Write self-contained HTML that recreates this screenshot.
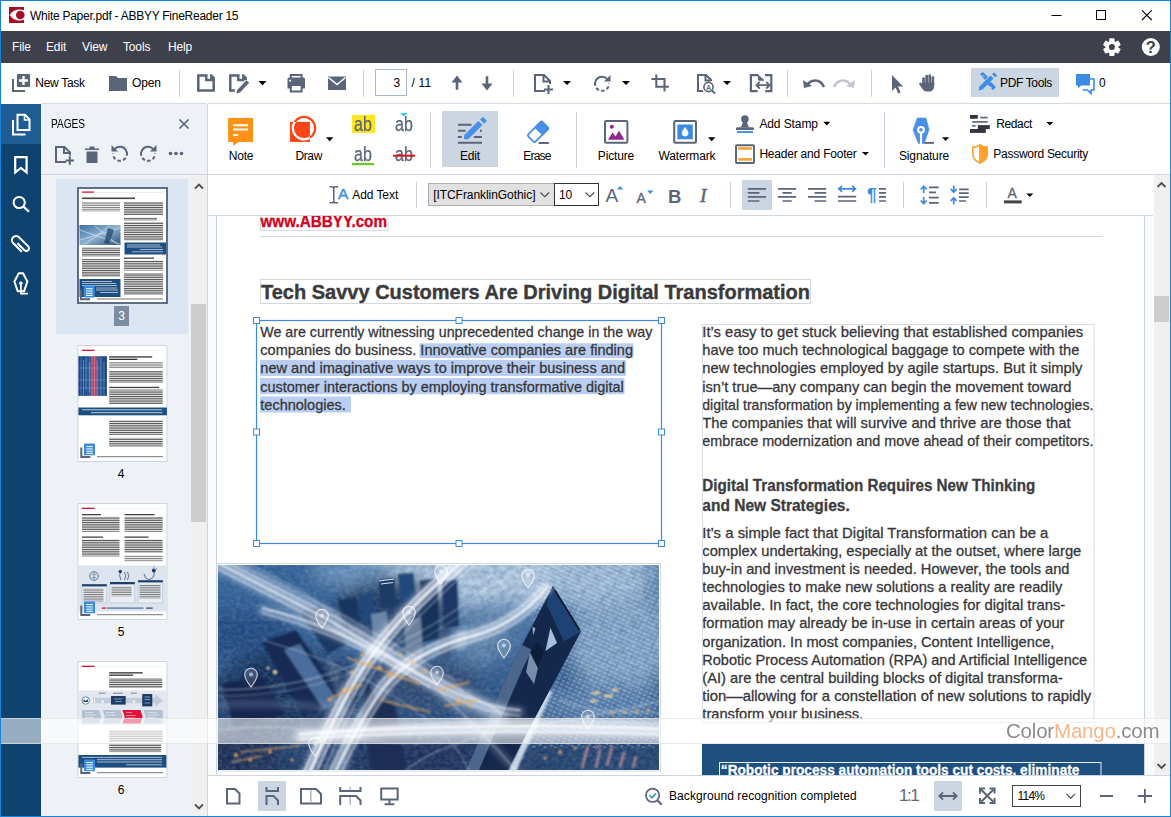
<!DOCTYPE html>
<html lang="en"><head><meta charset="utf-8"><title>White Paper.pdf - ABBYY FineReader 15</title>
<style>
*{box-sizing:border-box;margin:0;padding:0}
html,body{width:1171px;height:817px;overflow:hidden;background:#fff}
body{position:relative;font-family:"Liberation Sans",sans-serif;font-size:12px;color:#000}
.abs{position:absolute}
.t{position:absolute;white-space:nowrap;line-height:14px;height:14px}
.ui{letter-spacing:-0.15px}
.sep{position:absolute;width:1px;background:#c9d2de}
svg{position:absolute;overflow:visible}
.g{fill:#5b6579}
.gs{stroke:#5b6579;fill:none}
#win{position:absolute;left:0;top:0;width:1171px;height:817px;border:1px solid #1883d7;pointer-events:none;z-index:50}
#title{left:1px;top:1px;width:1169px;height:30px;background:#fff}
#menu{left:1px;top:31px;width:1169px;height:32px;background:#3e404c;color:#fff}
#tb{left:1px;top:63px;width:1169px;height:40px;background:#fff}
#side{left:1px;top:104px;width:40px;height:712px;background:#0e426f}
#side .act{position:absolute;left:0;top:0;width:40px;height:40px;background:#1f5c93}
#pages{left:41px;top:103px;width:166px;height:713px;background:#eef1f5;border-top:1px solid #d3dae4}
#ribbon{left:208px;top:103px;width:962px;height:71px;background:#fff;border-top:1px solid #d3dae4}
#edbar{left:208px;top:174px;width:962px;height:41px;background:#fff;border-top:1px solid #ccd5e1}
#doc{left:208px;top:215px;width:945px;height:560px;background:#fff;border-top:1px solid #ccd5e1;overflow:hidden}
#status{left:208px;top:775px;width:962px;height:41px;background:#fff;border-top:1px solid #ccd5e1}
#vsb{left:1154px;top:175px;width:16px;height:600px;background:#f0f0f0}
.btnbg{position:absolute;background:#ccd6e2}
</style></head><body>
<div id="title" class="abs"></div>
<div id="menu" class="abs"></div>
<div id="tb" class="abs"></div>
<div id="side" class="abs"><div class="act"></div></div>
<div id="pages" class="abs"></div>
<div class="abs" style="left:207px;top:104px;width:1px;height:712px;background:#ccd5e1"></div>
<div id="ribbon" class="abs"></div>
<div id="edbar" class="abs"></div>
<div id="doc" class="abs"></div>
<div id="vsb" class="abs"></div>
<div id="status" class="abs"></div>
<!-- TITLE BAR -->
<svg width="1171" height="64" style="left:0;top:0" viewBox="0 0 1171 64">
 <rect x="9" y="7" width="15" height="16" fill="#a50c23"/>
 <path d="M9.6 15 C13 9.6 19 8.4 24 10.2 V19.8 C19 21.6 13 20.4 9.6 15Z" fill="#fff"/>
 <circle cx="20.3" cy="15" r="4.3" fill="#a50c23"/>
 <!-- window controls -->
 <path d="M1051.5 15.5 H1061.5" stroke="#000" stroke-width="1"/>
 <rect x="1096.5" y="10.5" width="9" height="9" fill="none" stroke="#000" stroke-width="1"/>
 <path d="M1142 10.3 L1151.7 20 M1151.7 10.3 L1142 20" stroke="#000" stroke-width="1.1"/>
 <!-- gear -->
 <g transform="translate(1111.9 47.1)" fill="#fff">
  <circle r="6.4"/>
  <rect x="-2.7" y="-8.8" width="5.4" height="17.6" rx="0.8"/>
  <rect x="-2.7" y="-8.8" width="5.4" height="17.6" rx="0.8" transform="rotate(60)"/>
  <rect x="-2.7" y="-8.8" width="5.4" height="17.6" rx="0.8" transform="rotate(120)"/>
  <circle r="3" fill="#3e404c"/>
 </g>
 <circle cx="1150.8" cy="47" r="9" fill="#fff"/>

</svg>
<div class="t" style="left:30px;top:9px;letter-spacing:-0.260px" id="ttl">White Paper.pdf - ABBYY FineReader 15</div>
<div class="t ui" style="left:12px;top:40px;color:#fff">File</div>
<div class="t ui" style="left:46px;top:40px;color:#fff">Edit</div>
<div class="t ui" style="left:82px;top:40px;color:#fff">View</div>
<div class="t ui" style="left:123px;top:40px;color:#fff">Tools</div>
<div class="t ui" style="left:168px;top:40px;color:#fff">Help</div>
<div class="t" style="left:1145.800px;top:39px;width:10px;text-align:center;color:#3e404c;font-weight:bold;font-size:16.500px;line-height:16px;height:16px">?</div>

<!-- TOOLBAR -->
<div class="btnbg" style="left:971px;top:68px;width:88px;height:29px"></div>
<div class="sep" style="left:179px;top:70px;height:27px"></div>
<div class="sep" style="left:363px;top:70px;height:27px"></div>
<div class="sep" style="left:513px;top:70px;height:27px"></div>
<div class="sep" style="left:787px;top:70px;height:27px"></div>
<div class="sep" style="left:871px;top:70px;height:27px"></div>
<div class="abs" style="left:375px;top:69px;width:32px;height:27px;border:1px solid #a9b7cb;background:#fff"></div>
<div class="t" style="left:35.3px;top:76px;letter-spacing:-0.3px">New Task</div>
<div class="t ui" style="left:132px;top:76px">Open</div>
<div class="t ui" style="left:380px;top:76px;width:20px;text-align:right">3</div>
<div class="t" style="left:411.4px;top:76px;letter-spacing:0.2px">/ 11</div>
<div class="t" style="left:1000px;top:76px;letter-spacing:-0.350px">PDF Tools</div>
<div class="t ui" style="left:1099px;top:76px">0</div>
<svg width="1171" height="44" style="left:0;top:62px" viewBox="0 62 1171 44">
 <!-- new task -->
 <path d="M13 79 V91 H25" class="gs" stroke-width="2"/>
 <rect x="17" y="74" width="13" height="13" rx="1" class="g"/>
 <path d="M19 80.5 H28 M23.5 76 V85" stroke="#fff" stroke-width="2.4"/>
 <!-- open -->
 <path d="M109 76 h7 l2 2 h9 v13 h-18z" class="g"/>
 <!-- save -->
 <path d="M198.3 75.4 H211.2 L213.7 77.9 V90.4 H198.3Z M206.3 75 V80 H211.3 V75" class="gs" stroke-width="2.5"/>
 <rect x="207.6" y="73.5" width="2.5" height="4" fill="#fff"/>
 <!-- save as -->
 <path d="M235 90.4 H230.3 V75.4 H243.2 L245.7 77.9 V80 M238.3 75 V80 H243.3 V75" class="gs" stroke-width="2.5"/>
 <path d="M236.2 93.6 L237.2 89.9 L246.4 80.2 L249.2 82.8 L240 92.500Z" class="g"/>
 <rect x="239.6" y="73.5" width="2.5" height="4" fill="#fff"/>
 <path d="M258.5 81 h8 l-4 4.300z" fill="#000"/>
 <!-- print -->
 <path d="M290.8 78 V75 h10.8 V78" class="gs" stroke-width="2"/>
 <path d="M287.5 79 a1.5 1.5 0 0 1 1.5 -1.5 h14.5 a1.5 1.5 0 0 1 1.5 1.5 v9.5 h-4 v-3.5 h-9.5 v3.5 h-4z" class="g"/>
 <path d="M290.8 85 h10.8 v6.5 h-10.8z" class="gs" stroke-width="2"/>
 <rect x="289.3" y="79.8" width="1.8" height="1.8" fill="#fff"/>
 <!-- mail -->
 <path d="M328 76.5 h18 v13.5 h-18z" class="g"/>
 <path d="M328.5 77.5 l8.5 7 l8.5 -7" stroke="#fff" stroke-width="1.6" fill="none"/>
 <!-- up / down -->
 <path d="M457 75.6 L462.5 82.4 H458.3 V89.8 H455.7 V82.4 H451.500Z" class="g"/>
 <path d="M487 90.4 L492.500 83.600 H488.300 V76.200 H485.700 V83.600 H481.500Z" class="g"/>
 <!-- add page -->
 <path d="M545 91 H535 V75 H544 L550 81 V84 M543.5 75.5 V81.5 H549.5" class="gs" stroke-width="2"/>
 <path d="M544 89.5 H553 M548.5 85 V94" class="gs" stroke-width="2"/>
 <path d="M563 81 h8 l-4 4z" fill="#000"/>
 <!-- rotate -->
 <path d="M607.5 79.5 A7 7 0 1 0 609 83.5" class="gs" stroke-width="2" stroke-dasharray="19 2.4 3.4 2.4 3.4 2.4 3.4 2.4 10"/>
 <path d="M610.5 75 v6.5 h-6.5z" class="g"/>
 <path d="M622 81 h8 l-4 4z" fill="#000"/>
 <!-- crop -->
 <path d="M651.4 79 H664.5 V91.6 M656.3 74.4 V86.8 H668.8" class="gs" stroke-width="2.1"/>
 <!-- recognize -->
 <path d="M703 91 H698 V75 H706 L711 80 V81 M705.5 75.5 V80.5 H710.5" class="gs" stroke-width="2"/>
 <circle cx="708.5" cy="87" r="4.6" class="gs" stroke-width="1.6"/>
 <path d="M712 90.5 l3 3" class="gs" stroke-width="2"/>
 <path d="M723 81 h8 l-4 4z" fill="#000"/>
 <text x="706.3" y="89.6" font-family="Liberation Sans, sans-serif" font-size="6.5" font-weight="bold" fill="#5b6579">A</text>
 <!-- compare -->
 <path d="M758.4 75.2 H750.9 V91.2 H757.6 M765 75.2 H771.3 V91.2 H765.3" class="gs" stroke-width="2.2"/>
 <path d="M758.4 75.2 L763.8 80.2 H758.4Z" class="g" stroke="#5b6579" stroke-width="1"/>
 <path d="M756.5 85.2 H769.5 M759.8 81.9 l-3.3 3.3 l3.3 3.3 M766.2 81.9 l3.3 3.3 l-3.3 3.3" class="gs" stroke-width="1.8"/>
 <!-- undo redo -->
 <path d="M807 86 C810 79 820 78 824 87" class="gs" stroke-width="2.6"/>
 <path d="M803 80 l1 8 l8 -2z" class="g"/>
 <path d="M851 86 C848 79 838 78 834 87" fill="none" stroke="#c2c6cd" stroke-width="2.6"/>
 <path d="M855 80 l-1 8 l-8 -2z" fill="#c2c6cd"/>
 <!-- pointer -->
 <path d="M892 75 V91 l3.6 -3.6 l2.6 6 l2.4 -1 l-2.6 -6 h5z" class="g"/>
 <!-- hand -->
 <g class="g">
 <rect x="922.2" y="77.3" width="2.7" height="9" rx="1.3"/>
 <rect x="925.3" y="74.8" width="2.7" height="11" rx="1.3"/>
 <rect x="928.4" y="74.3" width="2.7" height="11" rx="1.3"/>
 <rect x="931.5" y="76.3" width="2.7" height="10" rx="1.3"/>
 <path d="M922.2 82.5 H934.2 V86 C934.2 89.5 932 91.6 929 91.6 H927 C924.5 91.6 923.3 90.3 922 88.3 L919.3 84.3 C918.6 83 920.3 82 921.3 83 L922.2 84Z"/>
 </g>
 <!-- pdf tools -->
 <g fill="#3b8be3">
  <path d="M978.5 90.5 l1 -4 l11 -11 l3 3 l-11 11z"/>
  <path d="M992 74 l2-1.5 l3 3 l-1.5 2z"/>
  <path d="M980 74 l3 -2 l5 5 l-3 3z M987.5 84.5 l3 -3 l5.5 5.5 l-3 3z"/>
 </g>
 <path d="M982.6 75.2 l1.6 1.6 M989.6 86.2 l1.6 1.6" stroke="#fff" stroke-width="0.9"/>
 <!-- comments -->
 <path d="M1080 79 h14 v11 h-3 v3.5 l-3.5 -3.5 h-5" fill="none" stroke="#3b8be3" stroke-width="1.6"/>
 <path d="M1076 74 h14 v11.5 h-9 l-3 3 v-3 h-2z" fill="#3b8be3"/>
</svg>
<!-- SIDEBAR ICONS -->
<svg width="42" height="300" style="left:0;top:104px" viewBox="0 104 42 300">
 <g fill="none" stroke="#fff" stroke-width="2">
  <path d="M17.5 114.8 H25 L29.5 119.3 V130 H17.500Z"/>
  <path d="M24.5 115 V120 H29.5" stroke-width="1.6"/>
  <path d="M13 120 V134.5 H25.5"/>
  <path d="M15.2 157.2 H26.6 V172.5 L20.9 168 L15.2 172.500Z" stroke-width="2.2"/>
  <circle cx="19.2" cy="202.5" r="5.6"/>
  <path d="M23.4 206.6 L29 211.6" stroke-width="2.2"/>
  <path d="M16.5 243.5 L22.5 249.5 a2.3 2.3 0 0 0 3.3 -3.3 L17.8 238.2 a3.6 3.6 0 0 0 -5.1 5.1 L20.2 250.8" transform="translate(21.2 245) scale(1.15) translate(-19.7 -245)" stroke-width="1.8"/>
  <path d="M18.8 273.2 H23 L27.4 281.5 L24 291.3 H17.8 L14.4 281.500Z" stroke-linejoin="round"/>
  <circle cx="20.9" cy="283.3" r="1.4" fill="#fff" stroke-width="1"/>
  <path d="M20.9 284 V293.6 H27.8" stroke-width="1.8"/>
 </g>
</svg>
<!-- PAGES PANEL -->
<div class="t" style="left:50.5px;top:117px;font-size:12px;transform:scaleX(0.84);transform-origin:0 0">PAGES</div>
<div class="abs" style="left:41px;top:174px;width:166px;height:1px;background:#ccd5e1"></div>
<svg width="166" height="70" style="left:41px;top:104px" viewBox="41 104 166 70">
 <path d="M179.5 119.5 L188.5 128.5 M188.5 119.5 L179.5 128.5" class="gs" stroke-width="1.7"/>
 <!-- add page -->
 <path d="M66 162 H56 V147 H64.5 L70 152.5 V155.5 M64 147.5 V153 H69.5" class="gs" stroke-width="2"/>
 <path d="M65.5 160.5 H74 M69.8 156.3 V164.8" class="gs" stroke-width="2"/>
 <!-- trash -->
 <path d="M86.5 151.5 H97.5 V163 H86.500Z M85 148.5 H99 V150 H85Z M89.5 146.5 H94.5 V148.5 H89.500Z" class="g"/>
 <!-- rotate left -->
 <path d="M114.5 149.5 A7 7 0 1 1 113 153.5" class="gs" stroke-width="2" stroke-dasharray="19 2.4 3.4 2.4 3.4 2.4 3.4 2.4 10"/>
 <path d="M111.5 145 v6.5 h6.500z" class="g"/>
 <!-- rotate right -->
 <path d="M153.5 149.5 A7 7 0 1 0 155 153.5" class="gs" stroke-width="2" stroke-dasharray="19 2.4 3.4 2.4 3.4 2.4 3.4 2.4 10"/>
 <path d="M156.5 145 v6.5 h-6.500z" class="g"/>
 <circle cx="170.5" cy="153.5" r="1.8" class="g"/><circle cx="176" cy="153.5" r="1.8" class="g"/><circle cx="181.5" cy="153.5" r="1.8" class="g"/>
</svg>
<!-- thumbnails -->
<div class="abs" style="left:56px;top:179px;width:132px;height:155px;background:#dce6f2"></div>
<div class="abs" style="left:191px;top:175px;width:16px;height:641px;background:#f0f0f0"></div>
<div class="abs" style="left:191px;top:304px;width:15px;height:218px;background:#cdcdcd"></div>
<svg width="166" height="642" style="left:41px;top:175px" viewBox="41 175 166 642">
 <defs>
  <pattern id="tl" width="4" height="1.8" patternUnits="userSpaceOnUse"><rect width="4" height="1" fill="#505050"/></pattern>
  <pattern id="tl2" width="4" height="1.8" patternUnits="userSpaceOnUse"><rect width="4" height="1" fill="#808080"/></pattern>
  <linearGradient id="ph3" x1="0" y1="0" x2="1" y2="1"><stop offset="0" stop-color="#3e6f9e"/><stop offset="0.5" stop-color="#8fb2d2"/><stop offset="1" stop-color="#2a5078"/></linearGradient>
  <linearGradient id="ph4" x1="0" y1="0" x2="1" y2="0"><stop offset="0" stop-color="#17407a"/><stop offset="0.35" stop-color="#2a5a98"/><stop offset="0.56" stop-color="#b0506e"/><stop offset="0.7" stop-color="#3a5a9a"/><stop offset="1" stop-color="#1a3f78"/></linearGradient>
  <g id="dico">
   <path d="M0 4 V13.5 H9" fill="none" stroke="#5b6579" stroke-width="2"/>
   <rect x="2.7" y="0" width="11" height="11.7" rx="0.8" fill="#3b8be3"/>
   <path d="M5 3 H11.5 M5 5.3 H11.5 M5 7.6 H11.5 M5 9.7 H11.5" stroke="#fff" stroke-width="1"/>
  </g>
 </defs>
 <path d="M195 188.5 L199 184.5 L203 188.5" fill="none" stroke="#505050" stroke-width="1.8"/>
 <path d="M195 804.5 L199 808.5 L203 804.5" fill="none" stroke="#505050" stroke-width="1.8"/>
 <!-- page 3 -->
 <rect x="78" y="188" width="89" height="115" fill="#fff" stroke="#5d6d85" stroke-width="2"/>
 <rect x="82" y="191.5" width="12" height="1.2" fill="#d0021b"/>
 <rect x="96" y="192.2" width="67" height="0.5" fill="#ddd"/>
 <rect x="82" y="197.5" width="53" height="1.6" fill="#444"/>
 <rect x="82" y="202" width="38" height="9.5" fill="url(#tl2)"/>
 <rect x="124" y="202" width="39" height="13" fill="url(#tl)"/>
 <rect x="124" y="217.5" width="33" height="3" fill="url(#tl)"/>
 <rect x="124" y="222" width="39" height="18.5" fill="url(#tl)"/>
 <rect x="79.5" y="225" width="41" height="20" fill="url(#ph3)"/>
 <path d="M80 230 L120 244 M84 245 L110 226 M80 240 L120 228 M95 226 L118 245" stroke="#dce9f5" stroke-width="0.8" opacity="0.8"/>
 <path d="M108 228 l6 2 l-5 14 l-5 -1z" fill="#274c72" opacity="0.8"/>
 <rect x="124.5" y="242.5" width="41.5" height="12" fill="#1c4e80"/>
 <path d="M127 245 H160 M127 247 H162 M140 249.5 H163 M132 251.8 H163" stroke="#dfe8f2" stroke-width="0.7"/>
 <rect x="82" y="247.5" width="38" height="9" fill="url(#tl)"/>
 <rect x="82" y="259" width="38" height="18" fill="url(#tl)"/>
 <rect x="124" y="257.5" width="30" height="1.4" fill="#555"/>
 <rect x="124" y="260.5" width="39" height="10" fill="url(#tl)"/>
 <rect x="124" y="273" width="39" height="22" fill="url(#tl)"/>
 <rect x="79.5" y="279" width="41" height="18" fill="#1c4e80"/>
 <path d="M82 281.5 H112 M82 283.5 H116 M82 285.5 H117 M96 288 H117 M96 290 H118 M100 292.5 H118" stroke="#dfe8f2" stroke-width="0.7"/>
 <rect x="97" y="298.5" width="66" height="1" fill="#777"/>
 <use href="#dico" x="81" y="285.7"/>
 <!-- page 4 -->
 <rect x="77.9" y="345.5" width="89" height="116" fill="#fff" stroke="#cfd6df" stroke-width="1"/>
 <rect x="82" y="349.7" width="12.5" height="1.2" fill="#d0021b"/>
 <rect x="96" y="350.4" width="67" height="0.5" fill="#e2e2e2"/>
 <rect x="78.4" y="356.2" width="28.5" height="39.7" fill="url(#ph4)"/>
 <path d="M92 356.2 V396 M94.5 356.2 V396 M97 360 V396 M89.5 362 V392" stroke="#f07a8a" stroke-width="0.8" opacity="0.8"/>
 <path d="M81 356.2 V396 M83.5 360 V396 M86 358 V390 M101 358 V396 M104 362 V396" stroke="#6fc0e8" stroke-width="0.7" opacity="0.7"/>
 <path d="M78.4 380 H106.9 M78.4 388 H106.9 M78.4 368 H100" stroke="#9fd0f0" stroke-width="0.5" opacity="0.6"/>
 <rect x="109.2" y="356.3" width="43" height="1.3" fill="#333"/><rect x="109.2" y="358.7" width="28" height="1.3" fill="#333"/>
 <rect x="109.2" y="362" width="53.5" height="6.5" fill="url(#tl2)"/>
 <rect x="109.2" y="370.8" width="53.5" height="12" fill="url(#tl)"/>
 <rect x="109.2" y="386.8" width="50" height="1.3" fill="#444"/>
 <rect x="109.2" y="389.5" width="53.5" height="14.5" fill="url(#tl)"/>
 <rect x="78.4" y="407.5" width="88.5" height="7.8" fill="#1c4e80"/>
 <path d="M82 409.8 H162 M91 412.7 H162.5" stroke="#e6eef6" stroke-width="0.8"/>
 <rect x="109.2" y="420.3" width="53.5" height="14.8" fill="url(#tl)"/>
 <rect x="109.2" y="437.8" width="53.5" height="8.8" fill="url(#tl)"/>
 <rect x="97" y="456.2" width="66" height="1" fill="#777"/>
 <use href="#dico" x="81.3" y="443.6"/>
 <!-- page 5 -->
 <rect x="77.9" y="503.5" width="89" height="116" fill="#fff" stroke="#cfd6df" stroke-width="1"/>
 <rect x="82" y="507.7" width="12.5" height="1.2" fill="#d0021b"/>
 <rect x="96" y="508.4" width="67" height="0.5" fill="#e2e2e2"/>
 <rect x="82" y="514" width="19" height="1.3" fill="#444"/>
 <rect x="82" y="516.9" width="37.5" height="14.8" fill="url(#tl)"/>
 <rect x="82" y="536.5" width="21" height="1.3" fill="#444"/>
 <rect x="82" y="539.2" width="37.5" height="17.2" fill="url(#tl)"/>
 <rect x="124.6" y="514" width="30" height="1.3" fill="#444"/>
 <rect x="124.6" y="516.9" width="38" height="14.8" fill="url(#tl)"/>
 <rect x="124.6" y="536.5" width="24" height="1.3" fill="#444"/>
 <rect x="124.6" y="539.2" width="38" height="13.5" fill="url(#tl)"/>
 <rect x="124.6" y="555.4" width="38" height="6" fill="url(#tl2)"/>
 <rect x="78.4" y="565.5" width="88" height="46" fill="#dde4ee"/>
 <circle cx="94" cy="576" r="4.3" fill="none" stroke="#3d5a80" stroke-width="0.8"/><path d="M91.5 575 q2.5 -2 5 0 M92 577.5 h4 M94 572 v8" fill="none" stroke="#3d5a80" stroke-width="0.5"/>
 <path d="M121 571 q-3 4 0 9 M124.5 572 q2.5 3.5 0 8 M127.5 572 q2.5 3.5 0 8" fill="none" stroke="#3d5a80" stroke-width="0.8"/><circle cx="120.3" cy="571.5" r="1.7" fill="#1c3e68"/>
 <path d="M144 574 q2 7 7 5 q4 -2 3 -8" fill="none" stroke="#3d5a80" stroke-width="0.9"/><circle cx="153.8" cy="570.5" r="1.9" fill="#1c3e68"/><path d="M153.8 566.5 v1.5 M157 568 l-1 1" stroke="#3d5a80" stroke-width="0.6"/>
 <rect x="82" y="584.2" width="24.8" height="2.5" fill="#1c3e68"/><rect x="82" y="586.7" width="24.8" height="16.3" fill="#e9eef5" stroke="#a9b6c8" stroke-width="0.5"/><rect x="83.5" y="588.5" width="20" height="13" fill="url(#tl2)"/>
 <rect x="110" y="582" width="24.8" height="2.5" fill="#1c3e68"/><rect x="110" y="584.5" width="24.8" height="18.5" fill="#e9eef5" stroke="#a9b6c8" stroke-width="0.5"/><rect x="111.5" y="586.3" width="20" height="10" fill="url(#tl2)"/>
 <rect x="138" y="580.2" width="24.8" height="2.5" fill="#1c3e68"/><rect x="138" y="582.7" width="24.8" height="20.3" fill="#e9eef5" stroke="#a9b6c8" stroke-width="0.5"/><rect x="139.5" y="584.5" width="21" height="14" fill="url(#tl2)"/>
 <rect x="101.8" y="607.5" width="4" height="1.2" fill="#d0021b"/><rect x="106.8" y="607.5" width="36.7" height="1.2" fill="#4a6a95"/><rect x="146.2" y="607.5" width="6.5" height="1.2" fill="#1c3e68"/>
 <rect x="97" y="614.2" width="66" height="1" fill="#777"/>
 <use href="#dico" x="81.3" y="601.6"/>
 <!-- page 6 -->
 <rect x="77.9" y="661.5" width="89" height="116" fill="#fff" stroke="#cfd6df" stroke-width="1"/>
 <rect x="82" y="665.7" width="12.5" height="1.2" fill="#d0021b"/>
 <rect x="96" y="666.4" width="67" height="0.5" fill="#e2e2e2"/>
 <rect x="109.2" y="672.2" width="33.5" height="1.3" fill="#333"/><rect x="109.2" y="674.5" width="24" height="1.3" fill="#333"/>
 <rect x="109.2" y="678.2" width="53" height="9.8" fill="url(#tl)"/>
 <rect x="78.4" y="690.4" width="88" height="34.5" fill="#e3e8f0"/>
 <path d="M92 697.8 H155 V694 L163 700.5 L155 707 V703.3 H92Z" fill="#c3ccd9"/>
 <circle cx="85.7" cy="700.5" r="3.7" fill="#fff" stroke="#1c3e68" stroke-width="0.6"/><path d="M83.5 699 l2.2 2 l2.2 -2 v3 h-4.400z" fill="#1c3e68"/>
 <path d="M92.5 698.5 v4.5 M94.5 698.5 v4.5" stroke="#fff" stroke-width="0.8"/>
 <path d="M101.3 702.5 l1.3 -3 l1.3 3z M132.7 702.5 l1.3 -3 l1.3 3z" fill="#fff"/>
 <rect x="111" y="696" width="14.7" height="8.6" fill="#1c3e68"/><path d="M114 699 h8.5 M115 701.5 h6.5" stroke="#c8d4e4" stroke-width="0.6"/>
 <rect x="142.2" y="694" width="10.1" height="12.4" fill="#1c3e68"/><path d="M144.5 697 h5.5 M144.5 699.5 h5.5 M144.5 703 h5.5" stroke="#c8d4e4" stroke-width="0.6"/>
 <path d="M99 693.2 h6.5 M113 693.2 h10 M131 693.2 h6" stroke="#555" stroke-width="0.7"/>
 <path d="M82 710 h17 l2.3 6.8 l-2.3 6.8 h-17z" fill="#b4bfd0"/>
 <path d="M102.6 710 h17.5 l2.3 6.8 l-2.3 6.8 h-17.5 l2.3 -6.800z" fill="#b4bfd0"/>
 <path d="M122.4 710 h18 l2.3 6.8 l-2.3 6.8 h-18 l2.3 -6.800z" fill="#e0123c"/>
 <path d="M143.5 710 h19.3 v13.6 h-19.3 l2.3 -6.800z" fill="#b4bfd0"/>
 <path d="M85 712.5 h8 M85 715 h10 M85 717.5 h9 M106 712.5 h9 M106 715 h10 M126 712.5 h6 M126 715.5 h10 M126 718 h9 M147.5 712.5 h9 M147.5 715 h11 M147.5 717.5 h8" stroke="#fff" stroke-width="0.6" opacity="0.8"/>
 <rect x="109.2" y="730" width="53.5" height="12" fill="url(#tl2)"/>
 <rect x="109.2" y="743.7" width="52" height="8.4" fill="url(#tl)"/>
 <rect x="78.4" y="755" width="88" height="12.6" fill="#1c4e80"/>
 <path d="M82 757.4 H162 M97 759.7 H162 M97 762 H162 M126 764.8 H162" stroke="#e6eef6" stroke-width="0.7"/>
 <rect x="97" y="772.2" width="66" height="1" fill="#777"/>
 <use href="#dico" x="81.3" y="759.6"/>
</svg>
<div class="abs" style="left:114px;top:306px;width:15px;height:20px;background:#7b8ca3"></div>
<div class="t ui" style="left:114px;top:309px;width:15px;text-align:center;color:#fff">3</div>
<div class="t ui" style="left:111px;top:467px;width:20px;text-align:center">4</div>
<div class="t ui" style="left:111px;top:625px;width:20px;text-align:center">5</div>
<div class="t ui" style="left:111px;top:783px;width:20px;text-align:center">6</div>
<!-- RIBBON -->
<div class="btnbg" style="left:442px;top:111px;width:56px;height:56px"></div>
<div class="sep" style="left:430px;top:112px;height:56px"></div>
<div class="sep" style="left:576px;top:112px;height:56px"></div>
<div class="sep" style="left:884px;top:112px;height:56px"></div>
<div class="t ui" style="left:211px;top:149px;width:60px;text-align:center">Note</div>
<div class="t" style="left:278.7px;top:149px;width:60px;text-align:center;letter-spacing:-0.35px">Draw</div>
<div class="t ui" style="left:440px;top:149px;width:60px;text-align:center">Edit</div>
<div class="t" style="left:507px;top:149px;width:60px;text-align:center;letter-spacing:-0.750px">Erase</div>
<div class="t ui" style="left:586px;top:149px;width:60px;text-align:center">Picture</div>
<div class="t ui" style="left:647px;top:149px;width:80px;text-align:center">Watermark</div>
<div class="t ui" style="left:894px;top:149px;width:60px;text-align:center">Signature</div>
<div class="t" style="left:759.4px;top:117px;letter-spacing:-0.1px">Add Stamp</div>
<div class="t" style="left:759.4px;top:147px;letter-spacing:-0.21px">Header and Footer</div>
<div class="t" style="left:996.3px;top:117px;letter-spacing:-0.4px">Redact</div>
<div class="t" style="left:993.3px;top:147px;letter-spacing:-0.27px">Password Security</div>
<div class="abs" style="left:352px;top:115px;width:23px;height:18px;background:#ffe81a"></div>
<div class="t ab" style="left:354px;top:112.500px">ab</div>
<div class="t ab" style="left:395px;top:112.500px">ab</div>
<div class="t ab" style="left:354px;top:143px">ab</div>
<div class="t ab" style="left:395px;top:143px">ab</div>
<style>.ab{font-size:20px;line-height:22px;height:22px;color:#5b6579;transform:scaleX(0.8);transform-origin:0 0;-webkit-text-stroke:0.250px #5b6579}</style>
<svg width="963" height="70" style="left:208px;top:104px" viewBox="208 104 963 70">
 <defs><clipPath id="dc"><path d="M280 105 H340 V150 H280Z M289.9 121.9 V141.9 H309.9 V121.9Z" clip-rule="evenodd"/></clipPath></defs>
 <!-- note -->
 <path d="M228.1 118 H253.1 V141.9 H238.9 L233.1 145.8 V141.9 H228.100Z" fill="#ff9114"/>
 <path d="M233.1 125.2 H248.1 M233.1 129.4 H248.1 M233.1 135 H238.1" stroke="#fff" stroke-width="2"/>
 <!-- draw -->
 <rect x="289.9" y="121.9" width="20" height="20" fill="#fa4616"/>
 <circle cx="304" cy="128.1" r="11.2" fill="none" stroke="#fff" stroke-width="2.2"/>
 <circle cx="304" cy="128.1" r="11.2" fill="none" stroke="#fa4616" stroke-width="2.2" clip-path="url(#dc)"/>
 <path d="M326 137.3 h7.4 l-3.7 3.900z" fill="#000"/>
 <!-- ab marks -->
 <path d="M400 113 h7.6 l-3.8 3.400z" fill="#2fd3e8"/>
 <rect x="352" y="163" width="22" height="2.2" fill="#6cc81e"/>
 <rect x="393" y="154.7" width="22" height="2" fill="#e0121a"/>
 <!-- edit -->
 <path d="M457.9 124.7 H471.5 M457.9 130.8 H465.6 M480 130.8 H482 M457.9 137 H461.7 M473.8 137 H482 M457.9 142.8 H482" class="gs" stroke-width="2"/>
 <path d="M464.1 139.3 V135.2 L478.4 120.9 L482.5 125 L468.2 139.300Z" fill="#4990e4"/>
 <path d="M480 119.6 L482.2 117.4 Q482.9 116.8 483.6 117.4 L486.3 120.1 Q486.9 120.8 486.3 121.5 L484.1 123.700Z" fill="#4990e4"/>
 <!-- erase -->
 <g transform="translate(538 131.850) rotate(45)">
  <rect x="-5.1" y="-10.1" width="10.2" height="20.2" rx="1.8" fill="#fff" stroke="#4990e4" stroke-width="1.8"/>
  <path d="M-6 -0.5 V-9 Q-6 -11 -4 -11 H4 Q6 -11 6 -9 V-0.500Z" fill="#4990e4"/>
 </g>
 <path d="M538.6 143 H548.8" class="gs" stroke-width="2"/>
 <!-- picture -->
 <rect x="605" y="121" width="22.4" height="21.8" rx="1.2" class="gs" stroke-width="2"/>
 <path d="M608 139.7 l4.5 -7.2 l3 4 l3.5 -5.8 l5.5 9z" fill="#93278f"/>
 <circle cx="611.8" cy="126.8" r="2" fill="#93278f"/>
 <!-- watermark -->
 <rect x="674.2" y="121" width="21.8" height="21.8" rx="1.2" class="gs" stroke-width="2"/>
 <rect x="677.4" y="124.5" width="15.4" height="14.8" fill="#3b8be3"/>
 <path d="M685.1 127 c2 2.6 3.3 4.4 3.3 6.1 a3.3 3.3 0 0 1 -6.6 0 c0 -1.7 1.3 -3.5 3.3 -6.100z" fill="#fff"/>
 <path d="M708 137.3 h7.4 l-3.7 3.900z" fill="#000"/>
 <!-- stamp -->
 <circle cx="744.9" cy="119.1" r="3.8" class="g"/>
 <path d="M742.8 121 h4.2 l0.3 2.5 q0.3 2.2 2.4 3.7 h-9.6 q2.1 -1.5 2.4 -3.700z" class="g"/>
 <path d="M737.5 127.2 h14.9 q1.5 0 1.5 1.4 v1.3 h-17.9 v-1.3 q0 -1.4 1.5 -1.400z" class="g"/>
 <rect x="737" y="131.1" width="16" height="1.8" fill="#3b8be3"/>
 <path d="M823.3 121.8 h7 l-3.5 3.600z" fill="#000"/>
 <!-- header footer -->
 <rect x="736" y="145.2" width="18" height="17.8" rx="0.8" class="gs" stroke-width="1.9"/>
 <rect x="738.2" y="147.2" width="13.7" height="2.6" fill="#ff9f2e"/><rect x="738.2" y="158.1" width="13.7" height="2.6" fill="#ff9f2e"/>
 <path d="M862 152 h7 l-3.5 3.600z" fill="#000"/>
 <!-- signature -->
 <path d="M917.3 118 H926 L929 129.8 L924.2 143.6 H918.4 L913 129.800Z" fill="#4990e4" stroke="#4990e4" stroke-width="0.6" stroke-linejoin="round"/>
 <circle cx="921" cy="129.8" r="3.9" fill="#fff"/>
 <circle cx="921" cy="129.8" r="1.8" fill="#4990e4"/>
 <path d="M921 132.5 V144.2" stroke="#fff" stroke-width="2.2"/>
 <path d="M924.3 142.9 H934" class="gs" stroke-width="1.9"/>
 <path d="M942 137.2 h7.2 l-3.6 3.900z" fill="#000"/>
 <!-- redact -->
 <g fill="#34363f"><rect x="970" y="115" width="7.8" height="3.8"/><rect x="977.8" y="125.1" width="12" height="4"/><rect x="970" y="129" width="15.8" height="3.9"/></g>
 <path d="M980.2 117.6 H987.7 M972.2 121.9 H987.7 M972.2 125.9 H975.7" stroke="#5f6b80" stroke-width="1.6"/>
 <path d="M1046.3 122 h7 l-3.5 3.600z" fill="#000"/>
 <!-- shield -->
 <path d="M979.9 145 C982.5 146.8 985 147.4 987 147.4 V154 C987 158.5 983.5 161.5 979.9 162.8 C976.3 161.5 972.8 158.5 972.8 154 V147.4 C974.8 147.4 977.3 146.8 979.9 145Z" fill="#fff" stroke="#ffa02e" stroke-width="1.6"/>
 <path d="M979.9 145 C982.5 146.8 985 147.4 987 147.4 V154 C987 158.5 983.5 161.5 979.9 162.800Z" fill="#ffa02e" stroke="#ffa02e" stroke-width="1.6"/>
</svg>
<!-- EDIT BAR -->
<div class="btnbg" style="left:742px;top:180px;width:30px;height:30px"></div>
<div class="sep" style="left:416px;top:182px;height:26px"></div>
<div class="sep" style="left:730px;top:182px;height:26px"></div>
<div class="sep" style="left:903px;top:182px;height:26px"></div>
<div class="sep" style="left:986px;top:182px;height:26px"></div>
<div class="abs" style="left:428px;top:183px;width:127px;height:23px;background:#e1e1e1;border:1px solid #adadad"></div>
<div class="abs" style="left:554px;top:183px;width:45px;height:23px;background:#fff;border:1px solid #333"></div>
<div class="t" style="left:352.2px;top:188px;letter-spacing:-0.06px">Add Text</div>
<div class="t" style="left:338px;top:185px;font-size:15.500px;line-height:18px;height:18px;color:#3b8be3;-webkit-text-stroke:0.400px #3b8be3">A</div>
<div class="t" style="left:433.2px;top:188px;letter-spacing:-0.06px">[ITCFranklinGothic]</div>
<div class="t ui" style="left:559px;top:188px">10</div>
<div class="t" style="left:605.5px;top:184.8px;font-size:19px;line-height:22px;height:22px;color:#5b6579">A</div>
<div class="t" style="left:636.5px;top:188.6px;font-size:14px;line-height:18px;height:18px;color:#5b6579;-webkit-text-stroke:0.300px #5b6579">A</div>
<div class="t" style="left:668px;top:186px;font-size:18.500px;line-height:21px;height:21px;color:#5b6579;font-weight:bold">B</div>
<div class="t" style="left:700px;top:185.3px;font-size:19.5px;line-height:21px;height:21px;color:#5b6579;font-style:italic;font-family:'Liberation Serif',serif;-webkit-text-stroke:0.500px #5b6579">I</div>
<div class="t" style="left:1007.500px;top:185px;font-size:14px;line-height:16px;height:16px;color:#5b6579;-webkit-text-stroke:0.300px #5b6579">A</div>
<div class="t" style="left:867px;top:185px;font-size:17.5px;line-height:20px;height:20px;color:#3b8be3;font-weight:bold">¶</div>
<svg width="963" height="40" style="left:208px;top:175px" viewBox="208 175 963 40">
 <path d="M329.5 186.8 H332 Q333.8 186.8 333.8 188.5 V201 Q333.8 202.8 332 202.8 H329.5 M338.2 186.8 H335.6 Q333.8 186.8 333.8 188.5 M338.2 202.8 H335.6 Q333.8 202.8 333.8 201" class="gs" stroke-width="1.5"/>
 <path d="M540.5 192.5 l4.3 4.3 l4.3 -4.3 M585.5 192.5 l4.3 4.3 l4.3 -4.3" fill="none" stroke="#444" stroke-width="1.1"/>
 <path d="M616.9 189.5 h6.4 l-3.2 -3.500z" fill="#3b8be3"/>
 <path d="M647 190.6 h6.4 l-3.2 3.500z" fill="#3b8be3"/>
 <!-- align -->
 <g class="gs" stroke-width="1.7">
 <path d="M747.8 188.8 H766.1 M747.8 192.9 H759.5 M747.8 196.9 H766.1 M747.8 201 H759.5"/>
 <path d="M778 188.8 H796.2 M782.5 192.9 H791.7 M778 196.9 H796.2 M782.5 201 H791.7"/>
 <path d="M808 188.8 H826.2 M814.5 192.9 H826.2 M808 196.9 H826.2 M814.5 201 H826.2"/>
 <path d="M838 196.7 H856.2 M838 201 H856.2"/>
 <path d="M879 188.8 H886 M879 192.9 H886 M879 196.9 H886 M879 201 H886"/>
 <path d="M929 187.3 H938.7 M929 192.4 H936 M929 197.6 H938.7 M929 202.8 H938.7"/>
 <path d="M959 189.3 H968.7 M959 193.2 H968.7 M959 197.1 H968.7 M959 201 H966"/>
 </g>
 <g fill="none" stroke="#3b8be3" stroke-width="1.7">
 <path d="M839 188.8 H855.2 M842 185.8 l-3.2 3 l3.2 3 M852.2 185.8 l3.2 3 l-3.2 3"/>
 <path d="M923.7 186.5 V193 M920.7 189.5 l3 -3.2 l3 3.2 M923.7 197 V203.5 M920.7 200.5 l3 3.2 l3 -3.2"/>
 <path d="M953.7 185.5 V192 M950.7 189 l3 3.2 l3 -3.2 M953.7 198 V204.5 M950.7 201 l3 -3.2 l3 3.2"/>
 </g>
 <rect x="1004" y="200.4" width="17.7" height="3" fill="#444"/>
 <path d="M1026.3 193.4 h7 l-3.5 3.600z" fill="#000"/>
</svg>
<!-- right scrollbar -->
<svg width="17" height="600" style="left:1153px;top:175px" viewBox="1153 175 17 600">
 <rect x="1154" y="296" width="15" height="26" fill="#cdcdcd"/>
 <path d="M1157.5 187 L1161.5 183 L1165.5 187" fill="none" stroke="#505050" stroke-width="1.8"/>
 <path d="M1157.5 764 L1161.5 768 L1165.5 764" fill="none" stroke="#505050" stroke-width="1.8"/>
</svg>
<!-- DOCUMENT -->
<svg width="945" height="559" style="left:208px;top:216px;overflow:hidden" viewBox="208 216 945 559">
<defs>
<filter id="b1" x="-20%" y="-20%" width="140%" height="140%"><feGaussianBlur stdDeviation="1.2"/></filter>
<filter id="b1g" x="-10%" y="-10%" width="120%" height="120%"><feGaussianBlur stdDeviation="0.7"/></filter>
<filter id="b3" x="-20%" y="-20%" width="140%" height="140%"><feGaussianBlur stdDeviation="3.5"/></filter>
<filter id="b8" x="-30%" y="-30%" width="160%" height="160%"><feGaussianBlur stdDeviation="9"/></filter>
<filter id="b20" x="-30%" y="-30%" width="160%" height="160%"><feGaussianBlur stdDeviation="22"/></filter>
<linearGradient id="pbg" x1="0" y1="0" x2="0" y2="1"><stop offset="0" stop-color="#6f98c2"/><stop offset="0.45" stop-color="#305d93"/><stop offset="1" stop-color="#1b3763"/></linearGradient>
<linearGradient id="twr" x1="0" y1="0" x2="1" y2="0"><stop offset="0" stop-color="#142c54"/><stop offset="1" stop-color="#234a80"/></linearGradient>
<filter id="nz" x="0" y="0" width="100%" height="100%"><feTurbulence type="fractalNoise" baseFrequency="0.22 0.28" numOctaves="2" seed="4"/><feColorMatrix type="matrix" values="0 0 0 0 0.85  0 0 0 0 0.92  0 0 0 0 1  0.9 0.9 0 0 -0.62"/></filter>
<filter id="nzd" x="0" y="0" width="100%" height="100%"><feTurbulence type="fractalNoise" baseFrequency="0.16 0.2" numOctaves="2" seed="9"/><feColorMatrix type="matrix" values="0 0 0 0 0.05  0 0 0 0 0.1  0 0 0 0 0.2  0.9 0.9 0 0 -0.62"/></filter>
<pattern id="cg" width="5" height="4" patternUnits="userSpaceOnUse" patternTransform="rotate(24)"><rect width="3" height="1.6" fill="#c6d8ea"/><rect y="2.4" width="5" height="0.8" fill="#274a78" opacity="0.6"/></pattern>
<pattern id="cg2" width="7" height="5" patternUnits="userSpaceOnUse" patternTransform="rotate(-28)"><rect width="4" height="1.2" fill="#5f8cc0"/></pattern>
<g id="pin"><path d="M0 0 C-16 -22 -18 -30 -18 -36 a18 18 0 0 1 36 0 C18 -30 16 -22 0 0Z" fill="rgba(255,255,255,0.25)" stroke="#fff" stroke-width="3.5"/><circle cx="0" cy="-36" r="6" fill="#fff" opacity="0.8"/></g>
</defs>
<rect x="208" y="216" width="9" height="559" fill="#f9fafc"/>
<rect x="216" y="216" width="1" height="559" fill="#c9d3e0"/>
<rect x="1144" y="216" width="9" height="559" fill="#f9fafc"/>
<rect x="1144" y="216" width="1" height="559" fill="#c9d3e0"/>
<rect x="260.5" y="215.5" width="127.5" height="14.8" fill="none" stroke="#d4d7db" stroke-width="1"/>
<text x="260.5" y="227.3" font-family="Liberation Sans, sans-serif" font-weight="bold" font-size="16.6" fill="#d2021e" stroke="#d2021e" stroke-width="0.3" textLength="126.5" lengthAdjust="spacingAndGlyphs">www.ABBYY.com</text>
<rect x="260" y="236" width="842" height="1" fill="#d6d6d6"/>
<rect x="260.5" y="279.5" width="550" height="24" fill="none" stroke="#d4d7db" stroke-width="1"/>
<text x="261" y="298.7" font-family="Liberation Sans, sans-serif" font-weight="bold" font-size="21" fill="#3a3a3c" stroke="#3a3a3c" stroke-width="0.4" textLength="549" lengthAdjust="spacingAndGlyphs">Tech Savvy Customers Are Driving Digital Transformation</text>
<rect x="419.4" y="343.3" width="214" height="14.7" fill="#b9cef0"/>
<rect x="260" y="360" width="366" height="16" fill="#b9cef0"/>
<rect x="260" y="378" width="364.5" height="16.2" fill="#b9cef0"/>
<rect x="260" y="396.5" width="91" height="16" fill="#b9cef0"/>
<text x="260.3" y="337.2" font-family="Liberation Sans, sans-serif" font-size="14.4" fill="#36363a" stroke="#36363a" stroke-width="0.28" textLength="392" lengthAdjust="spacingAndGlyphs">We are currently witnessing unprecedented change in the way</text>
<text x="260.3" y="355.3" font-family="Liberation Sans, sans-serif" font-size="14.4" fill="#36363a" stroke="#36363a" stroke-width="0.28" textLength="372.7" lengthAdjust="spacingAndGlyphs">companies do business. Innovative companies are finding</text>
<text x="260.3" y="373.4" font-family="Liberation Sans, sans-serif" font-size="14.4" fill="#36363a" stroke="#36363a" stroke-width="0.28" textLength="364.8" lengthAdjust="spacingAndGlyphs">new and imaginative ways to improve their business and</text>
<text x="260.3" y="391.6" font-family="Liberation Sans, sans-serif" font-size="14.4" fill="#36363a" stroke="#36363a" stroke-width="0.28" textLength="363.5" lengthAdjust="spacingAndGlyphs">customer interactions by employing transformative digital</text>
<text x="260.3" y="409.8" font-family="Liberation Sans, sans-serif" font-size="14.4" fill="#36363a" stroke="#36363a" stroke-width="0.28" textLength="85.5" lengthAdjust="spacingAndGlyphs">technologies.</text>
<text x="702.3" y="337.2" font-family="Liberation Sans, sans-serif" font-size="14.4" fill="#36363a" stroke="#36363a" stroke-width="0.28" textLength="381" lengthAdjust="spacingAndGlyphs">It’s easy to get stuck believing that established companies</text>
<text x="702.3" y="355.3" font-family="Liberation Sans, sans-serif" font-size="14.4" fill="#36363a" stroke="#36363a" stroke-width="0.28" textLength="377" lengthAdjust="spacingAndGlyphs">have too much technological baggage to compete with the</text>
<text x="702.3" y="373.4" font-family="Liberation Sans, sans-serif" font-size="14.4" fill="#36363a" stroke="#36363a" stroke-width="0.28" textLength="380.1" lengthAdjust="spacingAndGlyphs">new technologies employed by agile startups. But it simply</text>
<text x="702.3" y="391.6" font-family="Liberation Sans, sans-serif" font-size="14.4" fill="#36363a" stroke="#36363a" stroke-width="0.28" textLength="369.1" lengthAdjust="spacingAndGlyphs">isn’t true—any company can begin the movement toward</text>
<text x="702.3" y="409.8" font-family="Liberation Sans, sans-serif" font-size="14.4" fill="#36363a" stroke="#36363a" stroke-width="0.28" textLength="391.1" lengthAdjust="spacingAndGlyphs">digital transformation by implementing a few new technologies.</text>
<text x="702.3" y="427.9" font-family="Liberation Sans, sans-serif" font-size="14.4" fill="#36363a" stroke="#36363a" stroke-width="0.28" textLength="368.2" lengthAdjust="spacingAndGlyphs">The companies that will survive and thrive are those that</text>
<text x="702.3" y="446" font-family="Liberation Sans, sans-serif" font-size="14.4" fill="#36363a" stroke="#36363a" stroke-width="0.28" textLength="391.1" lengthAdjust="spacingAndGlyphs">embrace modernization and move ahead of their competitors.</text>
<text x="702.3" y="537.8" font-family="Liberation Sans, sans-serif" font-size="14.4" fill="#36363a" stroke="#36363a" stroke-width="0.28" textLength="346.1" lengthAdjust="spacingAndGlyphs">It’s a simple fact that Digital Transformation can be a</text>
<text x="702.3" y="555.5" font-family="Liberation Sans, sans-serif" font-size="14.4" fill="#36363a" stroke="#36363a" stroke-width="0.28" textLength="379" lengthAdjust="spacingAndGlyphs">complex undertaking, especially at the outset, where large</text>
<text x="702.3" y="573.5" font-family="Liberation Sans, sans-serif" font-size="14.4" fill="#36363a" stroke="#36363a" stroke-width="0.28" textLength="367.2" lengthAdjust="spacingAndGlyphs">buy-in and investment is needed. However, the tools and</text>
<text x="702.3" y="591.6" font-family="Liberation Sans, sans-serif" font-size="14.4" fill="#36363a" stroke="#36363a" stroke-width="0.28" textLength="360.1" lengthAdjust="spacingAndGlyphs">technologies to make new solutions a reality are readily</text>
<text x="702.3" y="610.2" font-family="Liberation Sans, sans-serif" font-size="14.4" fill="#36363a" stroke="#36363a" stroke-width="0.28" textLength="363" lengthAdjust="spacingAndGlyphs">available. In fact, the core technologies for digital trans-</text>
<text x="702.3" y="628.4" font-family="Liberation Sans, sans-serif" font-size="14.4" fill="#36363a" stroke="#36363a" stroke-width="0.28" textLength="362.2" lengthAdjust="spacingAndGlyphs">formation may already be in-use in certain areas of your</text>
<text x="702.3" y="646.5" font-family="Liberation Sans, sans-serif" font-size="14.4" fill="#36363a" stroke="#36363a" stroke-width="0.28" textLength="352.1" lengthAdjust="spacingAndGlyphs">organization. In most companies, Content Intelligence,</text>
<text x="702.3" y="664.5" font-family="Liberation Sans, sans-serif" font-size="14.4" fill="#36363a" stroke="#36363a" stroke-width="0.28" textLength="384.8" lengthAdjust="spacingAndGlyphs">Robotic Process Automation (RPA) and Artificial Intelligence</text>
<text x="702.3" y="682.6" font-family="Liberation Sans, sans-serif" font-size="14.4" fill="#36363a" stroke="#36363a" stroke-width="0.28" textLength="360.5" lengthAdjust="spacingAndGlyphs">(AI) are the central building blocks of digital transforma-</text>
<text x="702.3" y="700.6" font-family="Liberation Sans, sans-serif" font-size="14.4" fill="#36363a" stroke="#36363a" stroke-width="0.28" textLength="389" lengthAdjust="spacingAndGlyphs">tion––allowing for a constellation of new solutions to rapidly</text>
<text x="702.3" y="718.6" font-family="Liberation Sans, sans-serif" font-size="14.4" fill="#36363a" stroke="#36363a" stroke-width="0.28" textLength="160.9" lengthAdjust="spacingAndGlyphs">transform your business.</text>
<text x="702.3" y="491" font-family="Liberation Sans, sans-serif" font-weight="bold" font-size="16" fill="#3c3c40" stroke="#3c3c40" stroke-width="0.28" textLength="332.9" lengthAdjust="spacingAndGlyphs">Digital Transformation Requires New Thinking</text>
<text x="702.3" y="510.7" font-family="Liberation Sans, sans-serif" font-weight="bold" font-size="16" fill="#3c3c40" stroke="#3c3c40" stroke-width="0.28" textLength="147.4" lengthAdjust="spacingAndGlyphs">and New Strategies.</text>
<rect x="702.5" y="324.5" width="391.5" height="398" fill="none" stroke="#d9dce1" stroke-width="1"/>
<rect x="256.5" y="320.5" width="405" height="223" fill="none" stroke="#3b8be3" stroke-width="1.2"/>
<rect x="253.5" y="317.5" width="6" height="6" fill="#fff" stroke="#3b8be3" stroke-width="1"/>
<rect x="456" y="317.5" width="6" height="6" fill="#fff" stroke="#3b8be3" stroke-width="1"/>
<rect x="658.5" y="317.5" width="6" height="6" fill="#fff" stroke="#3b8be3" stroke-width="1"/>
<rect x="253.5" y="429" width="6" height="6" fill="#fff" stroke="#3b8be3" stroke-width="1"/>
<rect x="658.5" y="429" width="6" height="6" fill="#fff" stroke="#3b8be3" stroke-width="1"/>
<rect x="253.5" y="540.5" width="6" height="6" fill="#fff" stroke="#3b8be3" stroke-width="1"/>
<rect x="456" y="540.5" width="6" height="6" fill="#fff" stroke="#3b8be3" stroke-width="1"/>
<rect x="658.5" y="540.5" width="6" height="6" fill="#fff" stroke="#3b8be3" stroke-width="1"/>
<rect x="702" y="744" width="442" height="32" fill="#1d4f7f"/>
<rect x="719.5" y="762.5" width="381.5" height="20" fill="none" stroke="#e8eef5" stroke-width="1"/>
<text x="720.8" y="775.3" font-family="Liberation Sans, sans-serif" font-weight="bold" font-size="14" fill="#fff" stroke="#fff" stroke-width="0.28" textLength="358.6" lengthAdjust="spacingAndGlyphs">“Robotic process automation tools cut costs, eliminate</text>
<rect x="217" y="563.5" width="443.5" height="207.5" fill="#fff" stroke="#d4d9e0" stroke-width="1"/>
<clipPath id="pc"><rect x="218" y="565" width="441" height="205"/></clipPath>
<g clip-path="url(#pc)">
<rect x="218" y="565" width="441" height="205" fill="url(#pbg)"/>
<!-- large tonal regions -->
<g filter="url(#b8)">
 <rect x="200" y="550" width="140" height="110" fill="#2d5e97"/>
 <rect x="205" y="612" width="85" height="45" fill="#1c4780"/>
 <ellipse cx="495" cy="574" rx="115" ry="30" fill="#b2cbe3"/>
 <ellipse cx="350" cy="572" rx="40" ry="12" fill="#6a96c2"/>
 <ellipse cx="605" cy="580" rx="60" ry="30" fill="#a6c3de"/>
 <ellipse cx="655" cy="600" rx="12" ry="40" fill="#5a86b4"/>
 <ellipse cx="620" cy="645" rx="52" ry="48" fill="#86a8cb"/>
 <ellipse cx="605" cy="705" rx="58" ry="24" fill="#5580b0"/>
 <rect x="560" y="748" width="110" height="40" fill="#1f3f6e"/>
 <ellipse cx="392" cy="612" rx="60" ry="34" fill="#1a3762"/>
 <ellipse cx="290" cy="692" rx="75" ry="42" fill="#0f2a54"/>
 <ellipse cx="236" cy="752" rx="45" ry="22" fill="#14284e"/>
 <ellipse cx="420" cy="754" rx="70" ry="22" fill="#142c56"/>
 <ellipse cx="415" cy="682" rx="65" ry="22" fill="#2c4470"/>
 <ellipse cx="532" cy="690" rx="18" ry="40" fill="#5a82b0"/>
 <ellipse cx="480" cy="640" rx="30" ry="25" fill="#5f84ae"/>
</g>
<!-- texture -->
<rect x="218" y="565" width="441" height="205" filter="url(#nz)" opacity="0.22"/>
<rect x="218" y="565" width="441" height="205" filter="url(#nzd)" opacity="0.42"/>
<!-- city grid -->
<g opacity="0.33" filter="url(#b1g)">
 <path d="M540 560 H670 V748 H520 Z" fill="url(#cg)"/>
</g>
<!-- buildings -->
<g filter="url(#b1)">
 <path d="M378.5 580 l16 -2 l1 28 l-14 3z" fill="#1c3a66"/>
 <path d="M398 574 l15.5 -1 l2 29 l-15 2z" fill="#24477a"/>
 <path d="M420 581 l17 -3 l2 61 l-17 3z" fill="#17305a"/>
 <path d="M442 582 l15 -3 l2 47 l-16 3z" fill="#1b3966"/>
 <path d="M338 600 l18 -3 l4 28 l-16 4z" fill="#183560"/>
 <path d="M360 596 l13 -3 l2 27 l-13 3z" fill="#24477a"/>
 <path d="M371 614 l16 -3 l2 24 l-16 4z" fill="#6b86a8"/>
 <path d="M404 621 l17 -3 l2 40 l-17 3z" fill="#6a819f"/>
 <path d="M439 629 l11 -2 l1 29 l-11 2z" fill="#3b577f"/>
 <path d="M456 631 l10 -2 l1 20 l-10 2z" fill="#7f9ab8"/>
 <path d="M262 642 l34 -12 l44 66 l-36 20z" fill="#132c54"/>
 <path d="M284 650 l16 -6 l38 58 l-14 8z" fill="#4c6d9b"/>
 <path d="M222 684 l40 -8 l24 38 l-52 12z" fill="#122850"/>
 <path d="M367 682 l8 14 l20 10 l12 64 h-36 l-8 -60z" fill="#1a2f52"/>
 <path d="M300 612 l20 -6 l26 38 l-18 10z" fill="#1a3862"/>
</g>
<path d="M379 581 l15 -2 M381 584 l12 -1.5" stroke="#d8e6f4" stroke-width="1.1"/>
<!-- tower -->
<path d="M549 690 L512 772" stroke="#d4e3f2" stroke-width="7" fill="none" filter="url(#b1)" opacity="0.9"/>
<path d="M552.9 586.1 L581 631.4 L526.7 733.5 L508 770 L466.3 770 L491.9 710.2 L511.2 665.7 L522.2 644.900Z" fill="#14284c"/>
<path d="M552.9 586.1 L581 631.4 L563.9 641.2 L546.7 604.500Z" fill="#1f4275"/>
<path d="M555 590.5 L579.5 630" stroke="#0b1830" stroke-width="1.6"/>
<path d="M550.4 627.8 L557.1 643.1 L545.5 651Z" fill="#a4c0dc"/>
<path d="M532.5 626.5 l3 2 l-2.5 7z" fill="#8fb0d0"/>
<path d="M522.2 644.9 L511.2 665.7 L491.9 710.2 L466.3 770 L479 770 L504 712 L523 668 L532 650Z" fill="#4d678c"/>
<path d="M530 652 L538 668 L534 684 L526 672Z" fill="#8ea7c4" opacity="0.8"/>
<path d="M538 642 L544 652 L538 668 L530 652Z" fill="#0e1d38"/>
<!-- light streaks -->
<g fill="none" stroke="#eaf3ff" stroke-linecap="round">
 <g filter="url(#b3)">
  <path d="M205 556 L327 618 L436 683 L500 716" stroke-width="17" opacity="0.480"/>
  <path d="M300 790 Q330 720 357 675 T440.5 579 T470 550" stroke-width="10" opacity="0.72"/>
  <path d="M325 790 Q352 730 380 690 Q410 650 478 634 Q520 620 546 586" stroke-width="9" opacity="0.650"/>
  <path d="M262 610 Q330 626 403 668 T520 712" stroke-width="7" opacity="0.5"/>
  <path d="M300 736 Q480 724 670 732" stroke-width="12" opacity="0.7"/>
  <path d="M217 705 Q300 700 365 715" stroke-width="4" opacity="0.350"/>
  <path d="M437 690 Q480 730 520 775" stroke-width="5" opacity="0.350"/>
  <path d="M330 660 Q350 720 345 775" stroke-width="4" opacity="0.4"/>
 </g>
 <g filter="url(#b1)" stroke="#fff">
  <path d="M212 560 L327 619 L436 684" stroke-width="1.5" opacity="0.850"/>
  <path d="M212 566 L327 625 L430 688" stroke-width="1.1" opacity="0.7"/>
  <path d="M218 558 L335 617 L445 682 L500 712" stroke-width="1.2" opacity="0.7"/>
  <path d="M232 560 L345 616 L455 680" stroke-width="1" opacity="0.550"/>
  <path d="M245 562 L300 590 L345 622" stroke-width="0.9" opacity="0.5"/>
  <path d="M302 790 Q332 720 359 675 T442.5 579 T472 550" stroke-width="2.2"/>
  <path d="M296 790 Q327 718 354 673 T437.5 577 T466 550" stroke-width="1.4" opacity="0.9"/>
  <path d="M309 790 Q337 722 364 677 T447.5 582 T478 552" stroke-width="1.4" opacity="0.9"/>
  <path d="M316 790 Q342 724 369 680 T452 585 T484 554" stroke-width="1" opacity="0.7"/>
  <path d="M327 790 Q354 730 382 690 Q412 650 480 634 Q522 620 548 586" stroke-width="1.8"/>
  <path d="M333 790 Q359 733 386 694 Q416 655 482 639 Q526 624 551 590" stroke-width="1.2" opacity="0.850"/>
  <path d="M321 790 Q349 727 377 687 Q407 646 476 630 Q518 616 544 584" stroke-width="1.1" opacity="0.8"/>
  <path d="M262 608 Q330 624 403 666 T520 710" stroke-width="1.3" opacity="0.850"/>
  <path d="M262 613 Q330 630 403 672 T520 716" stroke-width="1" opacity="0.7"/>
  <path d="M300 734 Q480 721 670 729" stroke-width="2" opacity="0.950"/>
  <path d="M300 739 Q480 727 670 735" stroke-width="1.4" opacity="0.850"/>
  <path d="M340 731 Q480 716 670 724" stroke-width="1" opacity="0.7"/>
  <path d="M437 689 Q480 729 520 775" stroke-width="1" opacity="0.6"/>
  <path d="M217 690 Q300 690 365 660 T470 600 T560 566" stroke-width="1" opacity="0.550"/>
  <path d="M217 696 Q300 697 368 666 T474 606 T566 570" stroke-width="0.8" opacity="0.450"/>
  <path d="M262 640 Q340 660 400 700 T470 775" stroke-width="0.9" opacity="0.5"/>
  <path d="M400 775 Q440 740 520 728 T665 700" stroke-width="1" opacity="0.550"/>
  <path d="M218 730 Q280 722 340 735 T440 742" stroke-width="0.9" opacity="0.5"/>
  <path d="M560 700 Q600 716 665 712" stroke-width="0.9" opacity="0.5"/>
 </g>
</g>
<!-- warm lights -->
<g filter="url(#b1)" fill="#ffb860" opacity="0.9">
 <path d="M348 658 L420 684 M327 700 L362 684 M438 690 L470 682 M380 700 L430 712 M444 706 L478 700" stroke="#f0a850" stroke-width="2.2" fill="none" opacity="0.7"/>
 <circle cx="362" cy="655" r="1.8"/><circle cx="371" cy="662" r="1.6"/><circle cx="380" cy="668" r="2"/><circle cx="390" cy="676" r="1.8"/><circle cx="352" cy="672" r="1.6"/><circle cx="345" cy="690" r="2"/>
 <circle cx="330" cy="700" r="1.6"/><circle cx="236" cy="755" r="2"/><circle cx="250" cy="760" r="1.6"/><circle cx="270" cy="752" r="1.8"/><circle cx="292" cy="760" r="1.5"/>
 <circle cx="400" cy="655" r="1.5"/><circle cx="412" cy="662" r="1.8"/><circle cx="425" cy="671" r="1.6"/><circle cx="458" cy="700" r="2"/><circle cx="470" cy="706" r="1.6"/>
 <circle cx="275" cy="672" r="2.2" fill="#ffd9a8"/><circle cx="268" cy="668" r="1.6" fill="#ffd9a8"/>
 <path d="M592 693 h8 M604 696 h9 M590 701 h7 M612 690 h6" stroke="#ffe0a0" stroke-width="2.4" fill="none"/>
 <circle cx="612" cy="713" r="1.5"/><circle cx="624" cy="712" r="1.5"/><circle cx="636" cy="711" r="1.5"/><circle cx="648" cy="710" r="1.5"/>
 <circle cx="560" cy="752" r="1.8"/><circle cx="545" cy="758" r="1.6"/><circle cx="575" cy="748" r="1.4"/>
 <path d="M588 746 l-6 22 M600 750 l-4 18 M612 746 l-5 20 M624 752 l-4 16 M636 756 l-3 12 M596 746 l4 2" stroke="#d89aa0" stroke-width="3" fill="none" opacity="0.750"/>
 <path d="M240 752 L300 746 M232 762 L262 756" stroke="#e8b070" stroke-width="1.6" fill="none" opacity="0.8"/>
</g>
<!-- pins -->
<g fill="rgba(255,255,255,0.18)" stroke="#fff" stroke-width="1.1" opacity="0.8">
 <path id="pn" d="M0 0 C-5 -6.5 -6.3 -9.5 -6.3 -12.5 a6.3 6.3 0 0 1 12.6 0 C6.3 -9.5 5 -6.5 0 0Z" transform="translate(322 628)"/>
 <use href="#pn" x="-71" y="59"/><use href="#pn" x="87" y="-3"/><use href="#pn" x="-7" y="128"/><use href="#pn" x="115" y="57"/>
 <use href="#pn" x="206" y="-40"/><use href="#pn" x="182" y="30"/><use href="#pn" x="266" y="101"/><use href="#pn" x="119" y="-44"/>
</g>
<g fill="#fff" opacity="0.55"><circle cx="322" cy="615.5" r="2"/><circle cx="251" cy="674.5" r="2"/><circle cx="409" cy="612.5" r="2"/><circle cx="315" cy="743.5" r="2"/><circle cx="437" cy="672.5" r="2"/><circle cx="528" cy="575.5" r="2"/><circle cx="504" cy="645.5" r="2"/><circle cx="588" cy="716.5" r="2"/><circle cx="441" cy="571.5" r="2"/></g>
</g>

</svg>
<!-- STATUS BAR -->
<div class="btnbg" style="left:258px;top:781px;width:28px;height:30px"></div>
<div class="btnbg" style="left:934px;top:781px;width:28px;height:30px"></div>
<div class="abs" style="left:1012px;top:785px;width:69px;height:22px;border:1px solid #444;background:#fff"></div>
<div class="t ui" style="left:669px;top:789px;letter-spacing:0.09px">Background recognition completed</div>
<div class="t" style="left:1017.6px;top:789px;letter-spacing:-0.8px">114%</div>
<div class="t" style="left:899px;top:786px;font-size:17px;line-height:20px;height:20px;color:#5b6579;letter-spacing:-1.5px">1:1</div>
<svg width="963" height="41" style="left:208px;top:776px" viewBox="208 776 963 41">
 <g class="gs" stroke-width="2">
 <path d="M227 789 H235 L239.5 793.5 V803.5 H227Z"/>
 <path d="M266.5 787 V791 H278 V787 M266.5 805 V796 H273.5 L278 800.5 V805"/>
 <path d="M301 789 H316 L321 794 V803.5 H301Z"/>
 <path d="M310.8 790 V802.5" stroke="#aab3c2" stroke-width="1.4"/>
 <path d="M340.2 787 V791 H360.5 V787 M340.2 805 V796 H356 L360.5 800.5 V805"/>
 <path d="M350.3 787 V790 M350.3 797 V805" stroke="#aab3c2" stroke-width="1.4"/>
 <path d="M381.2 788.6 H397.7 V799.6 H381.200Z M389.5 799.6 V803.5 M384.6 804.2 H394.4"/>
 </g>
 <!-- status icon -->
 <circle cx="652.6" cy="795.3" r="6.7" class="gs" stroke-width="1.7"/>
 <path d="M657.5 800.5 L661.8 804.8" class="gs" stroke-width="2"/>
 <path d="M649.3 795.3 l2.6 2.6 l4.3 -4.7" fill="none" stroke="#3b8be3" stroke-width="1.6"/>
 <!-- fit width -->
 <path d="M939.5 796 H956.5 M943 792.3 l-3.7 3.7 l3.7 3.7 M953 792.3 l3.7 3.7 l-3.7 3.7" class="gs" stroke-width="1.8"/>
 <!-- full screen -->
 <path d="M981 789.5 L993.5 802 M993.5 789.5 L981 802" class="gs" stroke-width="2"/>
 <path d="M980 793.5 V788.5 H985 M989.5 788.5 H994.5 V793.5 M994.5 798 V803 H989.5 M985 803 H980 V798" class="gs" stroke-width="2"/>
 <path d="M1066.5 793.8 l4.3 4.3 l4.3 -4.3" fill="none" stroke="#444" stroke-width="1.1"/>
 <path d="M1100 796 H1113 M1137.8 796 H1152 M1144.9 789 V803" class="gs" stroke-width="1.8"/>
</svg>
<!-- WATERMARK BAND -->
<div class="abs" style="left:1px;top:718px;width:1169px;height:26px;background:rgba(255,255,255,0.57);border-top:1px solid rgba(225,225,225,0.7);border-bottom:1px solid rgba(225,225,225,0.7);z-index:40"></div>
<div class="t" style="left:1006px;top:717.5px;font-size:20.5px;line-height:26px;height:26px;z-index:41;color:#8c8c8c;letter-spacing:-0.2px">Color<span style="color:#f5b68c">Mango</span>.com</div>
<div id="win"></div></body></html>
